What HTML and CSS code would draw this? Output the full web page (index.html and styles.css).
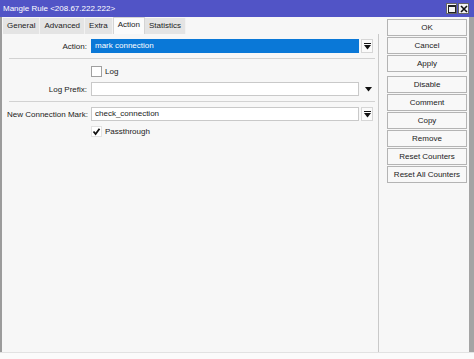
FILE: index.html
```html
<!DOCTYPE html>
<html lang="en">
<head>
  <meta charset="UTF-8">
  <title>Mangle Rule</title>
  <link rel="stylesheet" href="styles.css">
</head>
<body>
  <div class="window">
    <!-- Заголовок окна -->
    <div class="titlebar">
      <span class="title">Mangle Rule &lt;208.67.222.222&gt;</span>
      <div class="win-btns">
        <span class="win-btn">
          <svg width="8" height="8" viewBox="0 0 8 8"><rect x="0.5" y="0.5" width="7" height="7" fill="none" stroke="#222"/><rect x="0" y="0" width="8" height="2" fill="#222"/></svg>
        </span>
        <span class="win-btn">
          <svg width="8" height="8" viewBox="0 0 8 8"><path d="M1 1 L7 7 M7 1 L1 7" stroke="#111" stroke-width="1.6"/></svg>
        </span>
      </div>
    </div>

    <div class="frame">
      <div class="main">
        <div class="tabs">
          <span class="tab">General</span>
          <span class="tab">Advanced</span>
          <span class="tab">Extra</span>
          <span class="tab active">Action</span>
          <span class="tab">Statistics</span>
        </div>

        <div class="form">
          <div class="row">
            <span class="lbl">Action:</span>
            <div class="field selected">mark connection</div>
            <span class="drop-btn">
              <svg width="7" height="7" viewBox="0 0 7 7"><rect x="0" y="0" width="7" height="1" fill="#111"/><polygon points="0,2 7,2 3.5,6.5" fill="#111"/></svg>
            </span>
          </div>

          <div class="sep"></div>

          <div class="row check-row">
            <span class="lbl"></span>
            <span class="check"></span>
            <span class="check-text">Log</span>
          </div>

          <div class="row prefix-row">
            <span class="lbl">Log Prefix:</span>
            <div class="field"></div>
            <span class="drop-plain">
              <svg width="7" height="5" viewBox="0 0 7 5"><polygon points="0,0 7,0 3.5,4.5" fill="#111"/></svg>
            </span>
          </div>

          <div class="sep"></div>

          <div class="row">
            <span class="lbl">New Connection Mark:</span>
            <div class="field">check_connection</div>
            <span class="drop-btn">
              <svg width="7" height="7" viewBox="0 0 7 7"><rect x="0" y="0" width="7" height="1" fill="#111"/><polygon points="0,2 7,2 3.5,6.5" fill="#111"/></svg>
            </span>
          </div>

          <div class="row check-row">
            <span class="lbl"></span>
            <span class="check checked">
              <svg width="9" height="9" viewBox="0 0 9 9"><path d="M1.5 4.5 L3.6 7 L7.5 1.8" fill="none" stroke="#111" stroke-width="1.8"/></svg>
            </span>
            <span class="check-text">Passthrough</span>
          </div>
        </div>
      </div>

      <!-- Кнопки справа -->
      <div class="side">
        <button class="btn">OK</button>
        <button class="btn">Cancel</button>
        <button class="btn">Apply</button>
        <button class="btn group-start">Disable</button>
        <button class="btn">Comment</button>
        <button class="btn">Copy</button>
        <button class="btn">Remove</button>
        <button class="btn">Reset Counters</button>
        <button class="btn">Reset All Counters</button>
      </div>
    </div>
  </div>
</body>
</html>
```

FILE: styles.css
```css
:root {
  --title: #5154c6;
  --pane: #f7f7f7;
  --tab: #e4e4e4;
  --line: #c9c9c9;
  --text: #222;
}

* {
  box-sizing: border-box;
}

html, body {
  margin: 0;
  width: 474px;
  height: 359px;
  overflow: hidden;
  background: #fbfbfb;
  font-family: "Liberation Sans", Arial, sans-serif;
  font-size: 8px;
  color: var(--text);
}

.window {
  display: flex;
  flex-direction: column;
  height: 353px;
  border-bottom: 1px solid #e2e2e2;
}

/* Заголовок */
.titlebar {
  height: 17px;
  background: var(--title);
  display: flex;
  align-items: center;
  padding: 0 5px 0 3px;
}

.title {
  color: #fff;
  flex: 1;
  padding-bottom: 1px;
  white-space: nowrap;
}

.win-btns {
  display: flex;
  gap: 1px;
}

.win-btn {
  width: 11px;
  height: 11px;
  background: #f4f4f4;
  border: 1px solid #666;
  display: flex;
  align-items: center;
  justify-content: center;
}

.frame {
  flex: 1;
  display: flex;
  border-left: 2px solid #9c9c9c;
  border-right: 5px solid #a4a4a4;
  background: var(--pane);
}

.main {
  width: 377px;
  display: flex;
  flex-direction: column;
}

/* Вкладки */
.tabs {
  height: 17px;
  display: flex;
  align-items: flex-end;
  padding-left: 1px;
}

.tab {
  height: 16px;
  line-height: 15px;
  padding: 0 4px;
  background: var(--tab);
  border-right: 1px solid #f2f2f2;
  white-space: nowrap;
}

.tab.active {
  height: 17px;
  line-height: 14px;
  background: #fbfbfb;
  border: 1px solid #d4d4d4;
  border-bottom: none;
}

.form {
  flex: 1;
  padding: 5px 0 0 5px;
  border-right: 1px solid var(--line);
}

.row {
  display: flex;
  align-items: center;
  height: 14px;
}

.lbl {
  width: 80px;
  margin-right: 4px;
  text-align: right;
  white-space: nowrap;
  flex-shrink: 0;
}

.field {
  width: 268px;
  height: 14px;
  line-height: 12px;
  padding: 0 3px;
  background: #fff;
  border: 1px solid var(--line);
}

.field.selected {
  background: #0a78d7;
  border-color: #0a78d7;
  color: #fff;
}

.drop-btn {
  width: 12px;
  height: 14px;
  margin-left: 2px;
  background: #fafafa;
  border: 1px solid #d6d6d6;
  display: flex;
  align-items: center;
  justify-content: center;
}

.drop-plain {
  width: 12px;
  margin-left: 3px;
  display: flex;
  align-items: center;
  justify-content: center;
}

.sep {
  height: 1px;
  margin: 5px 3px 0 2px;
  background: #d2d2d2;
}

.check-row {
  height: 11px;
  margin-top: 6px;
}

.check {
  width: 11px;
  height: 11px;
  background: #fff;
  border: 1px solid #a0a0a0;
  display: flex;
  align-items: center;
  justify-content: center;
}

.check.checked {
  border-color: #e2e2e2;
}

.check-text {
  margin-left: 3px;
}

.prefix-row {
  margin-top: 5px;
}

.prefix-row + .sep {
  margin-top: 5px;
}

.sep + .row {
  margin-top: 5px;
}

.sep + .check-row {
  margin-top: 7px;
}

.row + .check-row {
  margin-top: 5px;
}

/* Правая колонка кнопок */
.side {
  width: 90px;
  padding: 2px 0 0 8px;
  display: flex;
  flex-direction: column;
  gap: 1px;
}

.btn {
  width: 80px;
  height: 17px;
  padding: 0;
  background: #f8f8f8;
  border: 1px solid #b4b4b4;
  font-family: inherit;
  font-size: 8px;
  color: var(--text);
}

.btn.group-start {
  margin-top: 3px;
}
```
